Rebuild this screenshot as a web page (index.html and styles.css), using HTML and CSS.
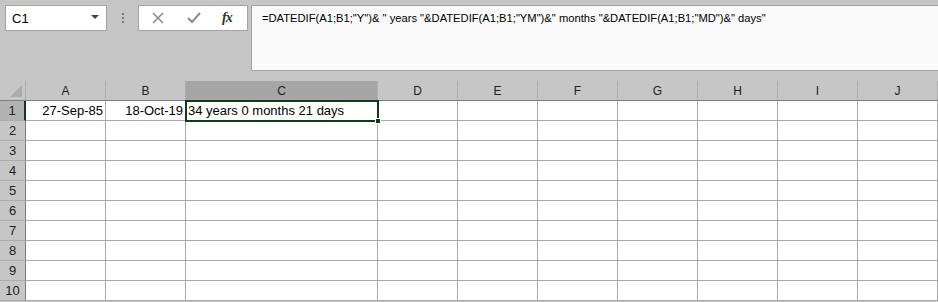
FILE: index.html
```html
<!DOCTYPE html>
<html lang="en">
<head>
  <meta charset="UTF-8">
  <title>Book1 - Excel</title>
  <link rel="stylesheet" href="styles.css">
</head>
<body>
<div class="barra">
  <div class="caixa-nome">
    <span>C1</span>
    <span class="seta"></span>
  </div>
  <div class="pontos"><i></i><i></i><i></i></div>
  <div class="botoes">
    <svg class="ico" width="12" height="12" viewBox="0 0 12 12"><path d="M1 1 L11 11 M11 1 L1 11" stroke="#8c8c8c" stroke-width="1.6"/></svg>
    <svg class="ico" width="14" height="12" viewBox="0 0 14 12"><path d="M1 6 L5 10 L13 1" fill="none" stroke="#8c8c8c" stroke-width="2"/></svg>
    <span class="fx">fx</span>
  </div>
  <div class="formula">=DATEDIF(A1;B1;"Y")&amp; " years "&amp;DATEDIF(A1;B1;"YM")&amp;" months "&amp;DATEDIF(A1;B1;"MD")&amp;" days"</div>
</div>

<div class="planilha">
  <div class="cab canto"><span class="tri"></span></div>
  <div class="cab">A</div>
  <div class="cab">B</div>
  <div class="cab ativo">C</div>
  <div class="cab">D</div>
  <div class="cab">E</div>
  <div class="cab">F</div>
  <div class="cab">G</div>
  <div class="cab">H</div>
  <div class="cab">I</div>
  <div class="cab">J</div>

  <div class="lin ativo">1</div>
  <div class="cel num">27-Sep-85</div>
  <div class="cel num">18-Oct-19</div>
  <div class="cel sel">34 years 0 months 21 days<span class="alca"></span></div>
  <div class="cel"></div><div class="cel"></div><div class="cel"></div><div class="cel"></div><div class="cel"></div><div class="cel"></div><div class="cel"></div>

  <div class="lin">2</div><div class="cel"></div><div class="cel"></div><div class="cel"></div><div class="cel"></div><div class="cel"></div><div class="cel"></div><div class="cel"></div><div class="cel"></div><div class="cel"></div><div class="cel"></div>
  <div class="lin">3</div><div class="cel"></div><div class="cel"></div><div class="cel"></div><div class="cel"></div><div class="cel"></div><div class="cel"></div><div class="cel"></div><div class="cel"></div><div class="cel"></div><div class="cel"></div>
  <div class="lin">4</div><div class="cel"></div><div class="cel"></div><div class="cel"></div><div class="cel"></div><div class="cel"></div><div class="cel"></div><div class="cel"></div><div class="cel"></div><div class="cel"></div><div class="cel"></div>
  <div class="lin">5</div><div class="cel"></div><div class="cel"></div><div class="cel"></div><div class="cel"></div><div class="cel"></div><div class="cel"></div><div class="cel"></div><div class="cel"></div><div class="cel"></div><div class="cel"></div>
  <div class="lin">6</div><div class="cel"></div><div class="cel"></div><div class="cel"></div><div class="cel"></div><div class="cel"></div><div class="cel"></div><div class="cel"></div><div class="cel"></div><div class="cel"></div><div class="cel"></div>
  <div class="lin">7</div><div class="cel"></div><div class="cel"></div><div class="cel"></div><div class="cel"></div><div class="cel"></div><div class="cel"></div><div class="cel"></div><div class="cel"></div><div class="cel"></div><div class="cel"></div>
  <div class="lin">8</div><div class="cel"></div><div class="cel"></div><div class="cel"></div><div class="cel"></div><div class="cel"></div><div class="cel"></div><div class="cel"></div><div class="cel"></div><div class="cel"></div><div class="cel"></div>
  <div class="lin">9</div><div class="cel"></div><div class="cel"></div><div class="cel"></div><div class="cel"></div><div class="cel"></div><div class="cel"></div><div class="cel"></div><div class="cel"></div><div class="cel"></div><div class="cel"></div>
  <div class="lin">10</div><div class="cel"></div><div class="cel"></div><div class="cel"></div><div class="cel"></div><div class="cel"></div><div class="cel"></div><div class="cel"></div><div class="cel"></div><div class="cel"></div><div class="cel"></div>
</div>
</body>
</html>
```

FILE: styles.css
```css
* {
  box-sizing: border-box;
}
body {
  margin: 0;
  background: #c6c6c6;
  font-family: 'Liberation Sans', Arial, sans-serif;
  color: #000;
  overflow: hidden;
  height: 302px;
}

/* barra de fórmulas */
.barra {
  display: flex;
  align-items: flex-start;
  height: 81px;
  padding: 5px 0 0 5px;
}
.caixa-nome {
  width: 102px;
  height: 26px;
  background: #fff;
  border: 1px solid #a3a3a3;
  display: flex;
  align-items: center;
  justify-content: space-between;
  padding: 0 7px 0 6px;
  font-size: 13px;
}
.seta {
  width: 0;
  height: 0;
  border-left: 4px solid transparent;
  border-right: 4px solid transparent;
  border-top: 4px solid #444;
  margin-top: -2px;
}
.pontos {
  width: 31px;
  height: 26px;
  display: flex;
  flex-direction: column;
  align-items: center;
  justify-content: center;
  gap: 2px;
}
.pontos i {
  display: block;
  width: 2px;
  height: 2px;
  background: #7c7c7c;
}
.botoes {
  width: 110px;
  height: 26px;
  background: #fff;
  border: 1px solid #a3a3a3;
  display: flex;
  align-items: center;
  padding: 0 0 0 13px;
}
.ico {
  display: block;
}
.ico + .ico {
  margin-left: 23px;
}
.fx {
  margin-left: 21px;
  font-family: 'Liberation Serif', serif;
  font-style: italic;
  font-weight: bold;
  font-size: 14px;
  color: #333;
  letter-spacing: -1px;
}
.formula {
  flex: 1;
  margin-left: 3px;
  margin-right: -10px;
  height: 66px;
  background: #fafafa;
  border: 1px solid #a3a3a3;
  padding: 5px 0 0 10px;
  font-size: 11.2px;
  line-height: 14px;
  white-space: nowrap;
}

/* planilha */
.planilha {
  display: grid;
  grid-template-columns: 26px 80px 80px 192px repeat(7, 80px);
  grid-template-rows: 20px repeat(10, 20px);
}
.cab {
  background: #c6c6c6;
  border-right: 1px solid #adadad;
  border-bottom: 1px solid #7d7d7d;
  font-size: 12px;
  color: #222;
  display: flex;
  align-items: center;
  justify-content: center;
}
.cab.ativo {
  background: #a6a6a6;
  border-bottom-color: #0e3b1c;
}
.canto {
  position: relative;
}
.tri {
  position: absolute;
  right: 3px;
  bottom: 3px;
  width: 0;
  height: 0;
  border-left: 12px solid transparent;
  border-bottom: 12px solid #ababab;
}
.lin {
  background: #c6c6c6;
  border-right: 1px solid #7d7d7d;
  border-bottom: 1px solid #adadad;
  font-size: 13px;
  color: #222;
  display: flex;
  align-items: center;
  justify-content: center;
}
.lin.ativo {
  background: #b3b3b3;
  border-right: 2px solid #0e3b1c;
}
.cel {
  background: #fff;
  border-right: 1px solid #a9a9a9;
  border-bottom: 1px solid #a9a9a9;
  font-size: 13px;
  line-height: 19px;
  padding: 0 2px;
  white-space: nowrap;
}
.cel.num {
  text-align: right;
}
.cel.sel {
  position: relative;
  outline: 2px solid #0e3b1c;
  outline-offset: -1px;
  border-color: transparent;
  z-index: 2;
}
.alca {
  position: absolute;
  right: -4px;
  bottom: -4px;
  width: 6px;
  height: 6px;
  background: #0e3b1c;
  border: 1px solid #fff;
}
```
